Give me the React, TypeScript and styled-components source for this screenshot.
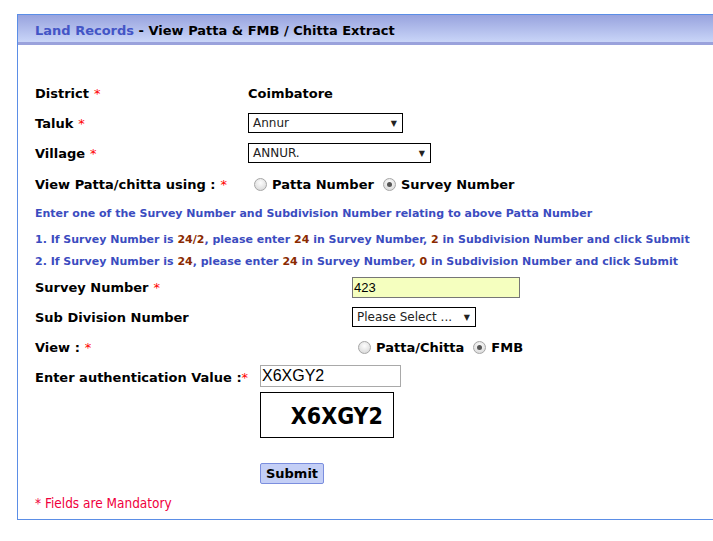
import React from "react";
import styled, { createGlobalStyle } from "styled-components";

const GlobalStyle = createGlobalStyle`
  body {
    margin: 0;
    background: #fff;
    font-family: "DejaVu Sans", Verdana, sans-serif;
  }
`;

const Page = styled.div`
  padding: 14px 0 0 17px;
`;

const Panel = styled.div`
  border-top: 1px solid #5b8ee6;
  border-left: 1px solid #5b8ee6;
  border-bottom: 1px solid #5b8ee6;
  height: 506px;
  box-sizing: border-box;
`;

const Header = styled.div`
  height: 30px;
  box-sizing: border-box;
  border-bottom: 3px solid #9aa2dc;
  background: linear-gradient(#98a3de, #c9d5f8);
  padding: 3px 0 0 17px;
  display: flex;
  align-items: center;
  font-family: "DejaVu Sans", Tahoma, sans-serif;
  font-weight: bold;
  font-size: 13px;
  color: #000;
`;

const Crumb = styled.span`
  color: #4355c6;
`;

const Body = styled.div`
  padding: 33px 0 0 17px;
`;

const Row = styled.div<{ $labelWidth: number; $shift?: number }>`
  display: grid;
  grid-template-columns: ${(p) => p.$labelWidth}px 1fr;
  align-items: center;
  height: 30px;
  padding-top: ${(p) => p.$shift || 0}px;
  box-sizing: border-box;
`;

const Label = styled.div`
  font-weight: bold;
  font-size: 13px;
  color: #000;
  white-space: nowrap;
`;

const Star = styled.span<{ $tight?: boolean }>`
  color: #ff0000;
  font-weight: normal;
  margin-left: ${(p) => (p.$tight ? 0 : 5)}px;
`;

const Value = styled.div`
  font-weight: bold;
  font-size: 13px;
  color: #000;
  display: flex;
  align-items: center;
`;

const SelectBox = styled.div<{ $width: number }>`
  width: ${(p) => p.$width}px;
  height: 20px;
  box-sizing: border-box;
  border: 1px solid #000;
  display: flex;
  align-items: center;
  justify-content: space-between;
  padding: 0 5px 0 4px;
  font-family: "DejaVu Sans", Verdana, sans-serif;
  font-weight: normal;
  font-size: 12px;
  color: #222;
`;

const Arrow = styled.span`
  font-size: 8px;
  color: #222;
`;

const RadioGroup = styled.div`
  display: flex;
  align-items: center;
  gap: 9px;
`;

const RadioItem = styled.label`
  display: flex;
  align-items: center;
  gap: 5px;
  font-weight: bold;
  font-size: 13px;
  color: #000;
`;

const RadioDot = styled.span<{ $checked?: boolean }>`
  width: 13px;
  height: 13px;
  border-radius: 50%;
  box-sizing: border-box;
  border: 1px solid #a6a6a6;
  background: radial-gradient(circle at 50% 35%, #fdfdfd, #d3d3d3);
  display: inline-flex;
  align-items: center;
  justify-content: center;
  &::after {
    content: "";
    display: ${(p) => (p.$checked ? "block" : "none")};
    width: 5px;
    height: 5px;
    border-radius: 50%;
    background: #555;
  }
`;

const Notes = styled.div`
  padding: 3px 0 1px;
  font-family: "DejaVu Sans", Tahoma, sans-serif;
  font-weight: bold;
  font-size: 11px;
  color: #3b4cc0;
`;

const Note = styled.div<{ $h: number; $gap?: number }>`
  height: ${(p) => p.$h}px;
  margin-top: ${(p) => p.$gap || 0}px;
  display: flex;
  align-items: center;
  white-space: nowrap;
`;

const Num = styled.span`
  color: #8a2a00;
`;

const TextInput = styled.div<{ $width: number; $height: number; $size: number; $bg?: string; $border?: string }>`
  width: ${(p) => p.$width}px;
  height: ${(p) => p.$height}px;
  box-sizing: border-box;
  border: 1px solid ${(p) => p.$border || "#767676"};
  background: ${(p) => p.$bg || "#fff"};
  display: flex;
  align-items: center;
  padding-left: 1px;
  font-family: "Liberation Sans", Arial, sans-serif;
  font-weight: normal;
  font-size: ${(p) => p.$size}px;
  color: #000;
`;

const AuthBlock = styled.div`
  display: grid;
  grid-template-columns: 225px 1fr;
`;

const AuthLabel = styled(Label)`
  padding-top: 8px;
`;

const AuthField = styled.div`
  display: flex;
  flex-direction: column;
  padding-top: 3px;
`;

const Captcha = styled.div`
  margin-top: 5px;
  width: 134px;
  height: 46px;
  box-sizing: border-box;
  border: 1px solid #000;
  display: flex;
  align-items: center;
  justify-content: flex-end;
  padding: 2px 10px 0 0;
  font-family: "DejaVu Sans Condensed", Tahoma, sans-serif;
  font-weight: bold;
  font-size: 23px;
  color: #000;
`;

const SubmitButton = styled.button`
  margin-top: 25px;
  width: 64px;
  height: 21px;
  box-sizing: border-box;
  border: 1px solid #7b8ede;
  border-radius: 2px;
  background: #c4cff6;
  padding: 0;
  font-family: "DejaVu Sans", Verdana, sans-serif;
  font-weight: bold;
  font-size: 13px;
  color: #000;
`;

const Mandatory = styled.div`
  margin-top: 11px;
  font-family: "DejaVu Sans Condensed", Tahoma, sans-serif;
  font-size: 13.5px;
  color: #f0003c;
`;

const App = () => {
  return (
    <Page>
      <GlobalStyle />
      <Panel>
        <Header>
          <Crumb>Land Records</Crumb>&nbsp;- View Patta &amp; FMB / Chitta Extract
        </Header>
        <Body>
          <Row $labelWidth={213}>
            <Label>
              District<Star>*</Star>
            </Label>
            <Value>Coimbatore</Value>
          </Row>
          <Row $labelWidth={213}>
            <Label>
              Taluk<Star>*</Star>
            </Label>
            <Value>
              <SelectBox $width={155}>
                Annur<Arrow>▼</Arrow>
              </SelectBox>
            </Value>
          </Row>
          <Row $labelWidth={213}>
            <Label>
              Village<Star>*</Star>
            </Label>
            <Value>
              <SelectBox $width={183}>
                ANNUR.<Arrow>▼</Arrow>
              </SelectBox>
            </Value>
          </Row>
          <Row $labelWidth={219} $shift={2}>
            <Label>
              View Patta/chitta using :<Star>*</Star>
            </Label>
            <RadioGroup>
              <RadioItem>
                <RadioDot />
                Patta Number
              </RadioItem>
              <RadioItem>
                <RadioDot $checked />
                Survey Number
              </RadioItem>
            </RadioGroup>
          </Row>
          <Notes>
            <Note $h={24}>
              Enter one of the Survey Number and Subdivision Number relating to above Patta Number
            </Note>
            <Note $h={24} $gap={2}>
              1. If Survey Number is&nbsp;<Num>24/2</Num>, please enter&nbsp;<Num>24</Num>&nbsp;in Survey
              Number,&nbsp;<Num>2</Num>&nbsp;in Subdivision Number and click Submit
            </Note>
            <Note $h={20}>
              2. If Survey Number is&nbsp;<Num>24</Num>, please enter&nbsp;<Num>24</Num>&nbsp;in Survey
              Number,&nbsp;<Num>0</Num>&nbsp;in Subdivision Number and click Submit
            </Note>
          </Notes>
          <Row $labelWidth={317}>
            <Label>
              Survey Number<Star>*</Star>
            </Label>
            <Value>
              <TextInput $width={168} $height={21} $size={13} $bg="#f5ffbf">
                423
              </TextInput>
            </Value>
          </Row>
          <Row $labelWidth={317}>
            <Label>Sub Division Number</Label>
            <Value>
              <SelectBox $width={124}>
                Please Select ...<Arrow>▼</Arrow>
              </SelectBox>
            </Value>
          </Row>
          <Row $labelWidth={323}>
            <Label>
              View :<Star>*</Star>
            </Label>
            <RadioGroup>
              <RadioItem>
                <RadioDot />
                Patta/Chitta
              </RadioItem>
              <RadioItem>
                <RadioDot $checked />
                FMB
              </RadioItem>
            </RadioGroup>
          </Row>
          <AuthBlock>
            <AuthLabel>
              Enter authentication Value :<Star $tight>*</Star>
            </AuthLabel>
            <AuthField>
              <TextInput $width={141} $height={22} $size={16} $border="#a9a9a9">
                X6XGY2
              </TextInput>
              <Captcha>X6XGY2</Captcha>
              <SubmitButton>Submit</SubmitButton>
            </AuthField>
          </AuthBlock>
          <Mandatory>* Fields are Mandatory</Mandatory>
        </Body>
      </Panel>
    </Page>
  );
};

export default App;
